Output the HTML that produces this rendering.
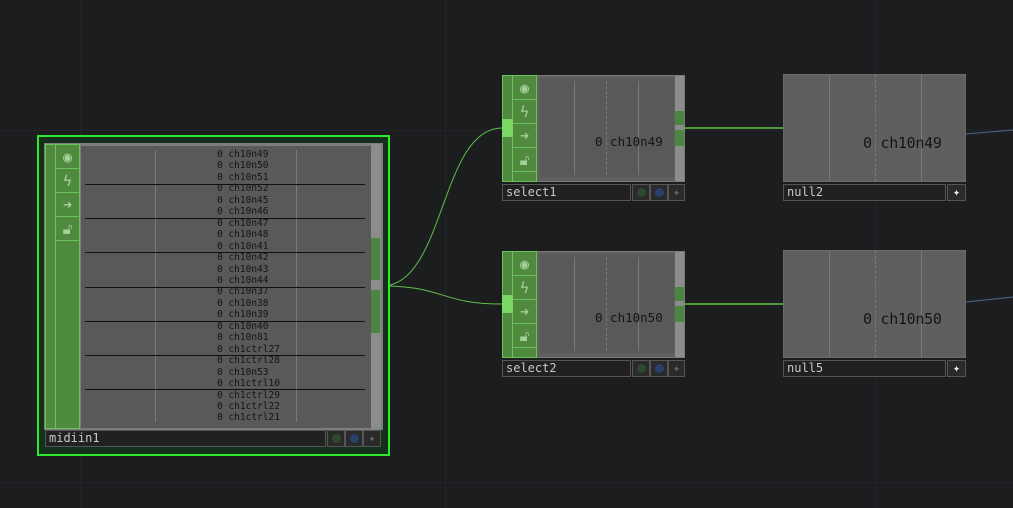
<!DOCTYPE html><html><head><style>
body{margin:0;width:1013px;height:508px;background:#1c1d1f;position:relative;overflow:hidden;font-family:"DejaVu Sans Mono","Liberation Mono",monospace}
div{position:absolute;box-sizing:border-box}
.gv{background:#232427;width:1px}
.body{background:#606060;border:1px solid #7a7a7a}
.data{background:#595959}
.strip{background:#4f8a3f;border:1px solid #6cc35a}
.cell{border-bottom:1px solid #6cc35a;left:0;right:0;height:24px;color:#a9cf9c;font-size:15px;display:flex;align-items:center;justify-content:center}
.name{background:#212121;border:1px solid #555;color:#c8c8c8;font-size:12px;padding-left:3px;line-height:15px}
.btn{background:#2a2a2a;border:1px solid #555}
.vl{width:1px;background:#7a7a7a}
.txt{color:#141414;font-size:9.5px;line-height:11.45px;white-space:pre}
</style></head><body>
<div class="gv" style="left:80px;top:0;height:508px"></div>
<div class="gv" style="left:445px;top:0;height:508px"></div>
<div class="gv" style="left:875px;top:0;height:508px"></div>
<div style="left:0;top:130px;width:1013px;height:1px;background:#232427"></div>
<div style="left:0;top:482px;width:1013px;height:1px;background:#232427"></div>

<svg width="1013" height="508" style="position:absolute;left:0;top:0">
<path d="M382 286 C445 286 440 128 502 128" stroke="#5fbf4a" fill="none" stroke-width="1"/>
<path d="M382 286 C445 286 440 304 502 304" stroke="#5fbf4a" fill="none" stroke-width="1"/>
<path d="M684 128 L783 128" stroke="#4c9a3c" stroke-width="2"/>
<path d="M684 304 L783 304" stroke="#4c9a3c" stroke-width="2"/>
<path d="M966 134 L1013 130" stroke="#4a6a88" stroke-width="1"/>
<path d="M966 302 L1013 297" stroke="#4a6a88" stroke-width="1"/>
</svg>

<!-- midiin1 -->
<div style="left:37px;top:135px;width:353px;height:321px;border:2px solid #2ee82e;background:#14301a"></div>
<div style="left:44px;top:143px;width:339px;height:287px;background:#7d7d7d"></div>
<div class="strip" style="left:45px;top:144px;width:11px;height:285px;border-right:none"></div>
<div class="strip" style="left:55px;top:144px;width:25px;height:285px">
 <div class="cell" style="top:0">◉</div><div class="cell" style="top:24px">ϟ</div><div class="cell" style="top:48px">➜</div><div class="cell" style="top:72px">🔓︎</div>
</div>
<div class="data" style="left:81px;top:146px;width:290px;height:282px"></div>
<div class="vl" style="left:155px;top:150px;height:272px"></div>
<div class="vl" style="left:296px;top:150px;height:272px"></div>
<div style="left:371px;top:144px;width:10px;height:285px;background:#8c8c8c"></div>
<div style="left:371px;top:238px;width:9px;height:42px;background:#4c8540"></div>
<div style="left:371px;top:290px;width:9px;height:43px;background:#4c8540"></div>
<div class="txt" style="left:217px;top:149px">0 ch10n49
0 ch10n50
0 ch10n51
0 ch10n52
0 ch10n45
0 ch10n46
0 ch10n47
0 ch10n48
0 ch10n41
0 ch10n42
0 ch10n43
0 ch10n44
0 ch10n37
0 ch10n38
0 ch10n39
0 ch10n40
0 ch10n81
0 ch1ctrl27
0 ch1ctrl28
0 ch10n53
0 ch1ctrl10
0 ch1ctrl29
0 ch1ctrl22
0 ch1ctrl21</div>
<div style="left:85px;top:184px;width:280px;height:1px;background:#111"></div>
<div style="left:85px;top:218px;width:280px;height:1px;background:#111"></div>
<div style="left:85px;top:252px;width:280px;height:1px;background:#111"></div>
<div style="left:85px;top:287px;width:280px;height:1px;background:#111"></div>
<div style="left:85px;top:321px;width:280px;height:1px;background:#111"></div>
<div style="left:85px;top:355px;width:280px;height:1px;background:#111"></div>
<div style="left:85px;top:389px;width:280px;height:1px;background:#111"></div>
<div class="name" style="left:45px;top:430px;width:281px;height:17px">midiin1</div>
<div class="btn" style="left:327px;top:430px;width:18px;height:17px"><div style="left:4px;top:3px;width:9px;height:9px;border-radius:50%;background:#2f4a2f"></div></div>
<div class="btn" style="left:345px;top:430px;width:18px;height:17px"><div style="left:4px;top:3px;width:9px;height:9px;border-radius:50%;background:#26416a"></div></div>
<div class="btn" style="left:363px;top:430px;width:18px;height:17px;color:#666;font-size:12px;text-align:center;line-height:14px">✦</div>

<!-- select1/2 -->
<div style="left:502px;top:75px;width:183px;height:126px">
 <div class="body" style="left:0;top:0;width:183px;height:107px"></div>
 <div class="strip" style="left:0;top:0;width:11px;height:107px;border-right:none"></div>
 <div class="strip" style="left:10px;top:0;width:25px;height:107px"><div class="cell" style="top:0">◉</div><div class="cell" style="top:24px">ϟ</div><div class="cell" style="top:48px">➜</div><div class="cell" style="top:72px">🔓︎</div></div>
 <div style="left:0;top:44px;width:11px;height:18px;background:#7bd862"></div>
 <div class="data" style="left:38px;top:4px;width:134px;height:98px"></div>
 <div class="vl" style="left:72px;top:6px;height:94px"></div>
 <div style="left:104px;top:6px;height:94px;border-left:1px dashed #7a7a7a"></div>
 <div class="vl" style="left:136px;top:6px;height:94px"></div>
 <div style="left:173px;top:1px;width:9px;height:105px;background:#8c8c8c"></div>
 <div style="left:173px;top:36px;width:9px;height:14px;background:#4c8540"></div>
 <div style="left:173px;top:55px;width:9px;height:16px;background:#4c8540"></div>
 <div class="txt" style="left:93px;top:60px;font-size:12.5px;line-height:14px">0 ch10n49</div>
 <div class="name" style="left:0;top:109px;width:129px;height:17px">select1</div>
 <div class="btn" style="left:130px;top:109px;width:18px;height:17px"><div style="left:4px;top:3px;width:9px;height:9px;border-radius:50%;background:#2f4a2f"></div></div>
 <div class="btn" style="left:148px;top:109px;width:18px;height:17px"><div style="left:4px;top:3px;width:9px;height:9px;border-radius:50%;background:#26416a"></div></div>
 <div class="btn" style="left:166px;top:109px;width:17px;height:17px;color:#666;font-size:12px;text-align:center;line-height:14px">✦</div>
</div>
<div style="left:502px;top:251px;width:183px;height:126px">
 <div class="body" style="left:0;top:0;width:183px;height:107px"></div>
 <div class="strip" style="left:0;top:0;width:11px;height:107px;border-right:none"></div>
 <div class="strip" style="left:10px;top:0;width:25px;height:107px"><div class="cell" style="top:0">◉</div><div class="cell" style="top:24px">ϟ</div><div class="cell" style="top:48px">➜</div><div class="cell" style="top:72px">🔓︎</div></div>
 <div style="left:0;top:44px;width:11px;height:18px;background:#7bd862"></div>
 <div class="data" style="left:38px;top:4px;width:134px;height:98px"></div>
 <div class="vl" style="left:72px;top:6px;height:94px"></div>
 <div style="left:104px;top:6px;height:94px;border-left:1px dashed #7a7a7a"></div>
 <div class="vl" style="left:136px;top:6px;height:94px"></div>
 <div style="left:173px;top:1px;width:9px;height:105px;background:#8c8c8c"></div>
 <div style="left:173px;top:36px;width:9px;height:14px;background:#4c8540"></div>
 <div style="left:173px;top:55px;width:9px;height:16px;background:#4c8540"></div>
 <div class="txt" style="left:93px;top:60px;font-size:12.5px;line-height:14px">0 ch10n50</div>
 <div class="name" style="left:0;top:109px;width:129px;height:17px">select2</div>
 <div class="btn" style="left:130px;top:109px;width:18px;height:17px"><div style="left:4px;top:3px;width:9px;height:9px;border-radius:50%;background:#2f4a2f"></div></div>
 <div class="btn" style="left:148px;top:109px;width:18px;height:17px"><div style="left:4px;top:3px;width:9px;height:9px;border-radius:50%;background:#26416a"></div></div>
 <div class="btn" style="left:166px;top:109px;width:17px;height:17px;color:#666;font-size:12px;text-align:center;line-height:14px">✦</div>
</div>

<!-- nulls -->
<div style="left:783px;top:74px;width:183px;height:127px">
 <div style="left:0;top:0;width:183px;height:108px;background:#5f5f5f;border:1px solid #6a6a6a"></div>
 <div class="vl" style="left:46px;top:1px;height:106px"></div>
 <div style="left:92px;top:1px;height:106px;border-left:1px dashed #7a7a7a"></div>
 <div class="vl" style="left:138px;top:1px;height:106px"></div>
 <div class="txt" style="left:80px;top:60px;font-size:15px;line-height:18px;letter-spacing:-0.3px">0 ch10n49</div>
 <div class="name" style="left:0;top:110px;width:163px;height:17px">null2</div>
 <div class="btn" style="left:164px;top:110px;width:19px;height:17px;color:#eee;font-size:12px;text-align:center;line-height:14px">✦</div>
</div>
<div style="left:783px;top:250px;width:183px;height:127px">
 <div style="left:0;top:0;width:183px;height:108px;background:#5f5f5f;border:1px solid #6a6a6a"></div>
 <div class="vl" style="left:46px;top:1px;height:106px"></div>
 <div style="left:92px;top:1px;height:106px;border-left:1px dashed #7a7a7a"></div>
 <div class="vl" style="left:138px;top:1px;height:106px"></div>
 <div class="txt" style="left:80px;top:60px;font-size:15px;line-height:18px;letter-spacing:-0.3px">0 ch10n50</div>
 <div class="name" style="left:0;top:110px;width:163px;height:17px">null5</div>
 <div class="btn" style="left:164px;top:110px;width:19px;height:17px;color:#eee;font-size:12px;text-align:center;line-height:14px">✦</div>
</div>
</body></html>
